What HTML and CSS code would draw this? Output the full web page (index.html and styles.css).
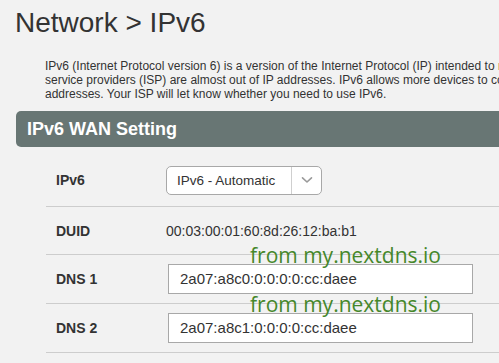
FILE: index.html
```html
<!DOCTYPE html>
<html>
<head>
<meta charset="utf-8">
<link rel="stylesheet" href="styles.css">
</head>
<body>
<div class="page">
  <h1 class="title">Network &gt; IPv6</h1>
  <p class="intro">
    <span class="line">IPv6 (Internet Protocol version 6) is a version of the Internet Protocol (IP) intended to replace IPv4. Internet</span>
    <span class="line">service providers (ISP) are almost out of IP addresses. IPv6 allows more devices to connect to the Internet.</span>
    <span class="line">addresses. Your ISP will let know whether you need to use IPv6.</span>
  </p>
  <div class="bar">IPv6 WAN Setting</div>
  <div class="rows">
    <div class="row row-select">
      <div class="label">IPv6</div>
      <div class="select">
        <span class="select-text">IPv6 - Automatic</span>
        <span class="select-btn">
          <svg width="12" height="8" viewBox="0 0 12 8"><path d="M1.5 1.8 L6 6 L10.5 1.8" fill="none" stroke="#9a9a9a" stroke-width="1.6" stroke-linecap="round" stroke-linejoin="round"/></svg>
        </span>
      </div>
    </div>
    <div class="row row-duid">
      <div class="label">DUID</div>
      <div class="value">00:03:00:01:60:8d:26:12:ba:b1</div>
    </div>
    <div class="row row-dns">
      <div class="label">DNS 1</div>
      <div class="input">2a07:a8c0:0:0:0:0:cc:daee</div>
      <div class="note">from my.nextdns.io</div>
    </div>
    <div class="row row-dns">
      <div class="label">DNS 2</div>
      <div class="input">2a07:a8c1:0:0:0:0:cc:daee</div>
      <div class="note">from my.nextdns.io</div>
    </div>
  </div>
</div>
</body>
</html>
```
FILE: styles.css
```css
html, body {
  margin: 0;
  padding: 0;
  background: #f2f2f2;
  overflow: hidden;
}
body {
  font-family: "Liberation Sans", Arial, sans-serif;
  color: #333;
}
.page {
  width: 540px;
}
.title {
  margin: 7px 0 0 15px;
  font-size: 28px;
  line-height: 32px;
  font-weight: normal;
  color: #333;
}
.intro {
  margin: 20px 0 0 45px;
  font-size: 12px;
  line-height: 14px;
  color: #333;
}
.line {
  display: block;
  white-space: nowrap;
}
.bar {
  margin: 10px 0 0 16px;
  height: 36px;
  line-height: 36px;
  background: #687674;
  color: #fff;
  font-weight: bold;
  font-size: 18px;
  padding-left: 11px;
  border-radius: 5px 0 0 5px;
}
.rows {
  margin: 7px 0 0 46px;
}
.row {
  position: relative;
  display: flex;
  align-items: center;
  border-bottom: 1px solid #cdcdcd;
  padding-left: 10px;
}
.row-select { height: 52px; }
.row-duid { height: 47px; }
.row-dns { height: 48px; }
.label {
  width: 110px;
  font-weight: bold;
  font-size: 14px;
  color: #333;
}
.select {
  display: flex;
  width: 154px;
  height: 27px;
  border: 1px solid #a8a8a8;
  border-radius: 5px;
  background: #fff;
}
.select-text {
  flex: 1;
  padding-left: 10px;
  font-size: 13.5px;
  line-height: 27px;
  color: #333;
}
.select-btn {
  width: 29px;
  border-left: 1px solid #cfcfcf;
  display: flex;
  align-items: center;
  justify-content: center;
}
.value {
  font-size: 14px;
  color: #333;
}
.input {
  margin-left: 2px;
  width: 292px;
  height: 28px;
  line-height: 28px;
  border: 1px solid #a8a8a8;
  background: #fff;
  padding-left: 11px;
  font-size: 15px;
  color: #333;
}
.note {
  position: absolute;
  left: 204px;
  top: -10px;
  font-family: "Open Sans", sans-serif;
  font-size: 21px;
  line-height: 21px;
  color: #45872a;
  white-space: nowrap;
}
```
